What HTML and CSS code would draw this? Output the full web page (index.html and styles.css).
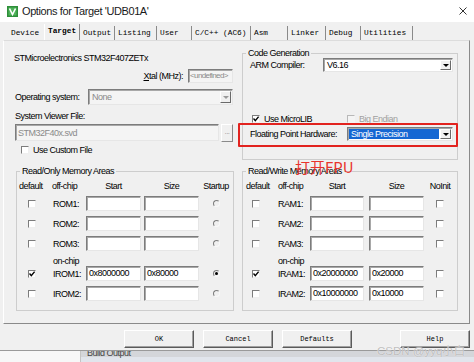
FILE: index.html
```html
<!DOCTYPE html>
<html lang="en">
<head>
  <meta charset="UTF-8">
  <meta name="viewport" content="width=device-width, initial-scale=1.0">
  <title>Options for Target 'UDB01A'</title>
  <link rel="stylesheet" href="styles.css">
</head>
<body>
  <div id="window">
    <div class="titlebar">
      <svg class="app-icon" viewBox="0 0 11 11">
        <rect x="0" y="0" width="11" height="11" fill="#2f8f3a"/>
        <rect x="1.5" y="1.5" width="8" height="8" fill="#4fb35a"/>
        <path d="M2.5 2.5 L5.5 8.5 L8.5 2.5" fill="none" stroke="#fff" stroke-width="1.6"/>
      </svg>
      <span class="title">Options for Target 'UDB01A'</span>
      <svg class="close" viewBox="0 0 8 8">
        <path d="M0.5 0.5 L7.5 7.5 M7.5 0.5 L0.5 7.5" stroke="#333" stroke-width="1"/>
      </svg>
    </div>

    <div class="dialog">
      <div class="tabs">
        <span class="tab first">Device</span>
        <span class="tab selected">Target</span>
        <span class="tab">Output</span>
        <span class="tab">Listing</span>
        <span class="tab">User</span>
        <span class="tab">C/C++ (AC6)</span>
        <span class="tab">Asm</span>
        <span class="tab">Linker</span>
        <span class="tab">Debug</span>
        <span class="tab">Utilities</span>
      </div>

      <div class="page">
        <div class="target-info">
          <div class="device">STMicroelectronics STM32F407ZETx</div>
          <div class="xtal-row">
            <span><u>X</u>tal (MHz):</span>
            <span class="edit disabled xtal">&lt;undefined&gt;</span>
          </div>
          <div class="os-row">
            <span>Operating system:</span>
            <div class="combo disabled os">
              <span class="value">None</span>
              <span class="arrow"><i class="tri"></i></span>
            </div>
          </div>
          <div class="svf-label">System Viewer File:</div>
          <div class="svd-row">
            <span class="edit disabled svd">STM32F40x.svd</span>
            <span class="browse">...</span>
          </div>
          <div class="custom">
            <span class="cb"></span>
            <span>Use Custom File</span>
          </div>
        </div>

        <fieldset class="group code-gen">
          <legend>Code Generation</legend>
          <div class="cg-row">
            <span>ARM Compiler:</span>
            <div class="combo arm">
              <span class="value">V6.16</span>
              <span class="arrow"><i class="tri"></i></span>
            </div>
          </div>
          <div class="opts-row">
            <span class="check-item microlib">
              <span class="cb checked"><svg viewBox="0 0 6 6"><path d="M0.5 2.5 L2.3 4.6 L5.6 0.6" fill="none" stroke="#000" stroke-width="1.4"/></svg></span>
              <span>Use MicroLIB</span>
            </span>
            <span class="check-item off">
              <span class="cb"></span>
              <span>Big Endian</span>
            </span>
          </div>
          <div class="cg-row fph">
            <span>Floating Point Hardware:</span>
            <div class="combo fpu">
              <span class="value picked">Single Precision</span>
              <span class="arrow"><i class="tri"></i></span>
            </div>
          </div>
        </fieldset>

        <fieldset class="group mem rom">
          <legend>Read/Only Memory Areas</legend>
          <div class="mem-head">
            <span class="c1">default</span>
            <span class="c2">off-chip</span>
            <span class="c3">Start</span>
            <span class="c4">Size</span>
            <span class="c5">Startup</span>
          </div>
          <div class="mem-row">
            <span class="c1"><span class="cb"></span></span>
            <span class="c2">ROM1:</span>
            <span class="edit"></span>
            <span class="edit"></span>
            <span class="c5"><span class="rb"></span></span>
          </div>
          <div class="mem-row">
            <span class="c1"><span class="cb"></span></span>
            <span class="c2">ROM2:</span>
            <span class="edit"></span>
            <span class="edit"></span>
            <span class="c5"><span class="rb"></span></span>
          </div>
          <div class="mem-row">
            <span class="c1"><span class="cb"></span></span>
            <span class="c2">ROM3:</span>
            <span class="edit"></span>
            <span class="edit"></span>
            <span class="c5"><span class="rb"></span></span>
          </div>
          <div class="mem-sub"><span class="c2">on-chip</span></div>
          <div class="mem-row first-chip">
            <span class="c1"><span class="cb checked"><svg viewBox="0 0 6 6"><path d="M0.5 2.5 L2.3 4.6 L5.6 0.6" fill="none" stroke="#000" stroke-width="1.4"/></svg></span></span>
            <span class="c2">IROM1:</span>
            <span class="edit">0x8000000</span>
            <span class="edit">0x80000</span>
            <span class="c5"><span class="rb on"></span></span>
          </div>
          <div class="mem-row">
            <span class="c1"><span class="cb"></span></span>
            <span class="c2">IROM2:</span>
            <span class="edit"></span>
            <span class="edit"></span>
            <span class="c5"><span class="rb"></span></span>
          </div>
        </fieldset>

        <fieldset class="group mem ram">
          <legend>Read/Write Memory Areas</legend>
          <div class="mem-head">
            <span class="c1">default</span>
            <span class="c2">off-chip</span>
            <span class="c3">Start</span>
            <span class="c4">Size</span>
            <span class="c5">NoInit</span>
          </div>
          <div class="mem-row">
            <span class="c1"><span class="cb"></span></span>
            <span class="c2">RAM1:</span>
            <span class="edit"></span>
            <span class="edit"></span>
            <span class="c5"><span class="cb"></span></span>
          </div>
          <div class="mem-row">
            <span class="c1"><span class="cb"></span></span>
            <span class="c2">RAM2:</span>
            <span class="edit"></span>
            <span class="edit"></span>
            <span class="c5"><span class="cb"></span></span>
          </div>
          <div class="mem-row">
            <span class="c1"><span class="cb"></span></span>
            <span class="c2">RAM3:</span>
            <span class="edit"></span>
            <span class="edit"></span>
            <span class="c5"><span class="cb"></span></span>
          </div>
          <div class="mem-sub"><span class="c2">on-chip</span></div>
          <div class="mem-row first-chip">
            <span class="c1"><span class="cb checked"><svg viewBox="0 0 6 6"><path d="M0.5 2.5 L2.3 4.6 L5.6 0.6" fill="none" stroke="#000" stroke-width="1.4"/></svg></span></span>
            <span class="c2">IRAM1:</span>
            <span class="edit">0x20000000</span>
            <span class="edit">0x20000</span>
            <span class="c5"><span class="cb"></span></span>
          </div>
          <div class="mem-row">
            <span class="c1"><span class="cb"></span></span>
            <span class="c2">IRAM2:</span>
            <span class="edit">0x10000000</span>
            <span class="edit">0x10000</span>
            <span class="c5"><span class="cb"></span></span>
          </div>
        </fieldset>

        <div class="fpu-mark"></div>
        <span class="fpu-note">打开FPU</span>
      </div>

      <div class="buttons">
        <span class="btn">OK</span>
        <span class="btn">Cancel</span>
        <span class="btn">Defaults</span>
        <span class="btn help">Help</span>
      </div>
    </div>

    <div class="backdrop">
      <span class="side"></span>
      <span class="build"><span>Build Output</span></span>
    </div>
    <span class="watermark">CSDN @yyq小白</span>
  </div>
</body>
</html>
```

FILE: styles.css
```css
* {
  box-sizing: border-box;
}
body {
  margin: 0;
  background: #fff;
  font-family: "Liberation Sans", Arial, sans-serif;
  font-size: 9px;
  letter-spacing: -0.5px;
  color: #000;
}
#window {
  position: relative;
  width: 474px;
  height: 362px;
  overflow: hidden;
  background: #fff;
}

/* title bar */
.titlebar {
  height: 22px;
  display: flex;
  align-items: center;
  padding-left: 7px;
}
.app-icon {
  width: 11px;
  height: 11px;
  margin-right: 4px;
}
.title {
  font-size: 11px;
  letter-spacing: -0.4px;
  color: #1a1a1a;
}
.close {
  width: 8px;
  height: 8px;
  margin-left: auto;
  margin-right: 7px;
}

/* dialog body */
.dialog {
  height: 329px;
  background: #f0f0f0;
  padding-top: 4px;
  border-bottom: 1px solid #9a9a9a;
}
.tabs {
  display: grid;
  grid-template-columns: 36px 36px 35px 42px 35px 59px 37px 38px 35px 52px;
  margin-left: 8px;
  height: 14px;
  font-family: "Liberation Mono", "Courier New", monospace;
  font-size: 7.8px;
  letter-spacing: 0;
}
.tab {
  line-height: 14px;
  padding-left: 3px;
  border-right: 1px solid #8a8a8a;
  white-space: nowrap;
}
.tab.first {
  border-right: none;
}
.tab.selected {
  font-weight: bold;
  margin-top: -2px;
  line-height: 15px;
  height: 17px;
  border-left: 1px solid #fff;
  background: #f0f0f0;
}

.page {
  position: relative;
  margin-left: 3px;
  width: 467px;
  height: 284px;
  border-top: 1px solid #dcdcdc;
  border-left: 1px solid #fff;
  border-right: 1px solid #8a8a8a;
  border-bottom: 1px solid #8a8a8a;
  padding-left: 10px;
  display: grid;
  grid-template-columns: 220px 216px;
  column-gap: 8px;
  row-gap: 6px;
  align-items: start;
  align-content: start;
}

/* left top: device info */
.target-info {
  display: flex;
  flex-direction: column;
}
.device {
  margin-top: 12px;
  line-height: 10px;
}
.xtal-row {
  margin-top: 5px;
  height: 15px;
  display: flex;
  justify-content: flex-end;
  align-items: center;
  gap: 5px;
}
.os-row {
  margin-top: 6px;
  height: 16px;
  display: flex;
  align-items: center;
  padding-left: 1px;
}
.svf-label {
  margin-top: 6px;
  line-height: 10px;
  padding-left: 1px;
}
.svd-row {
  margin-top: 3px;
  height: 17px;
  display: flex;
  gap: 2px;
  padding-left: 1px;
}
.custom {
  margin-top: 4px;
  height: 9px;
  display: flex;
  align-items: center;
  gap: 4px;
  padding-left: 7px;
}

/* controls */
.edit {
  display: block;
  height: 15px;
  background: #fff;
  border: 1px solid;
  border-color: #7c7c7c #e6e6e6 #e6e6e6 #7c7c7c;
  box-shadow: inset 1px 1px 0 #a8a8a8;
  padding: 1px 0 0 2px;
  line-height: 10px;
  white-space: nowrap;
  overflow: hidden;
}
.edit.disabled {
  background: #f4f4f4;
  color: #8a8a8a;
}
.edit.xtal {
  width: 45px;
  height: 14px;
  margin-right: 1px;
  padding-left: 1px;
  font-size: 8px;
  letter-spacing: -0.6px;
}
.edit.svd {
  width: 204px;
  height: 17px;
  padding-top: 3px;
}
.browse {
  width: 12px;
  height: 18px;
  background: #f0f0f0;
  border: 1px solid;
  border-color: #fff #8a8a8a #8a8a8a #fff;
  color: #9a9a9a;
  font-size: 8px;
  line-height: 14px;
  text-align: center;
}
.combo {
  display: flex;
  background: #fff;
  border: 1px solid;
  border-color: #7c7c7c #e6e6e6 #e6e6e6 #7c7c7c;
  box-shadow: inset 1px 1px 0 #a8a8a8;
  padding: 1px;
}
.combo .value {
  flex: 1;
  padding-left: 2px;
  display: flex;
  align-items: center;
}
.combo .arrow {
  width: 11px;
  background: #f0f0f0;
  border: 1px solid;
  border-color: #fff #6a6a6a #6a6a6a #fff;
  display: flex;
  align-items: center;
  justify-content: center;
}
.tri {
  width: 0;
  height: 0;
  border-left: 3px solid transparent;
  border-right: 3px solid transparent;
  border-top: 3px solid #000;
}
.combo.disabled {
  background: #f4f4f4;
  color: #8a8a8a;
}
.combo.disabled .tri {
  border-top-color: #9a9a9a;
}
.combo.os {
  margin-left: auto;
  margin-right: 1px;
  width: 145px;
  height: 16px;
}
.combo.arm {
  margin-left: auto;
  margin-right: 4px;
  width: 130px;
  height: 14px;
}
.combo.fpu {
  margin-left: auto;
  margin-right: 4px;
  width: 106px;
  height: 14px;
}
.value.picked {
  background: #1567d3;
  color: #fff;
  margin-right: 1px;
}

.cb {
  display: flex;
  align-items: center;
  justify-content: center;
  width: 8px;
  height: 8px;
  background: #fff;
  border: 1px solid;
  border-color: #7c7c7c #efefef #efefef #7c7c7c;
  flex-shrink: 0;
}
.cb svg {
  width: 6px;
  height: 6px;
}
.rb {
  display: block;
  width: 7px;
  height: 7px;
  border-radius: 50%;
  border: 1px solid;
  border-color: #7c7c7c #f8f8f8 #f8f8f8 #7c7c7c;
}
.rb.on::after {
  content: "";
  display: block;
  width: 3px;
  height: 3px;
  margin: 1px;
  border-radius: 50%;
  background: #000;
}

/* group boxes */
.group {
  margin: 0;
  padding: 0 0 9px;
  border: 1px solid #cdcdcd;
  min-width: 0;
}
.group legend {
  margin-left: 3px;
  padding: 0 2px;
  line-height: 10px;
}
.code-gen {
  margin-top: 7px;
  width: 216px;
  padding-bottom: 18px;
}
.cg-row {
  display: flex;
  align-items: center;
  height: 14px;
  padding-left: 7px;
}
.cg-row.fph {
  margin-top: 4px;
}
.opts-row {
  margin-top: 42px;
  height: 9px;
  display: flex;
  align-items: center;
  padding-left: 9px;
}
.check-item {
  display: flex;
  align-items: center;
  gap: 4px;
}
.check-item.microlib {
  width: 95px;
}
.check-item.off {
  color: #a0a0a0;
}
.check-item.off .cb {
  background: #f4f4f4;
  border-color: #b8b8b8 #f4f4f4 #f4f4f4 #b8b8b8;
}

/* memory area tables */
.rom {
  margin-left: 2px;
  width: 218px;
}
.ram {
  width: 216px;
}
.mem-head,
.mem-row,
.mem-sub {
  display: grid;
  align-items: center;
  white-space: nowrap;
}
.rom .mem-head,
.rom .mem-row,
.rom .mem-sub {
  grid-template-columns: 30px 39px 58px 55px 34px;
}
.ram .mem-head,
.ram .mem-row,
.ram .mem-sub {
  grid-template-columns: 26px 41px 59px 55px 32px;
}
.mem-head {
  margin-top: 5px;
  height: 10px;
  line-height: 10px;
}
.mem-row {
  margin-top: 5px;
  height: 15px;
}
.mem-row.first-chip {
  margin-top: 0;
}
.mem-sub {
  margin-top: 5px;
  height: 10px;
  line-height: 10px;
}
.mem-head .c1 {
  padding-left: 2px;
}
.ram .mem-head .c1 {
  padding-left: 3px;
}
.c2 {
  padding-left: 6px;
  grid-column: 2;
}
.ram .c2 {
  padding-left: 9px;
}
.mem-head .c2 {
  padding-left: 5px;
}
.ram .mem-head .c2 {
  padding-left: 9px;
}
.mem-head .c3 {
  text-align: center;
  padding-right: 3px;
}
.ram .mem-head .c3 {
  padding-right: 5px;
}
.mem-head .c4,
.mem-head .c5 {
  text-align: center;
}
.mem-row .c1,
.mem-row .c5 {
  display: flex;
  justify-content: center;
}
.mem-row .edit {
  width: 55px;
}
.ram .mem-row .edit:nth-child(3) {
  width: 54px;
}

/* annotation overlays */
.fpu-mark {
  position: absolute;
  left: 234px;
  top: 82px;
  width: 220px;
  height: 24px;
  border: 2px solid #e2231f;
  border-radius: 1px;
}
.fpu-note {
  position: absolute;
  left: 291px;
  top: 117px;
  font-family: "Noto Sans CJK SC", "Noto Sans", sans-serif;
  font-size: 15px;
  line-height: 17px;
  letter-spacing: 0;
  color: #e8342c;
}

/* buttons */
.buttons {
  display: flex;
  gap: 9px;
  margin-top: 6px;
  padding-left: 124px;
}
.btn {
  width: 70px;
  height: 18px;
  background: #f0f0f0;
  border: 1px solid;
  border-color: #fff #5a5a5a #5a5a5a #fff;
  box-shadow: inset -1px -1px 0 #a0a0a0;
  display: flex;
  align-items: center;
  justify-content: center;
  font-family: "Liberation Mono", "Courier New", monospace;
  font-size: 7px;
  letter-spacing: 0;
}
.btn.help {
  margin-left: 39px;
}

/* IDE behind the dialog */
.backdrop {
  display: flex;
  height: 11px;
}
.backdrop .side {
  width: 80px;
  background: #f7f7f7;
}
.backdrop .build {
  flex: 1;
  background: #e1e5ec;
  overflow: hidden;
  border-left: 1px solid #c4c4c4;
}
.backdrop .build span {
  display: block;
  margin-top: -3px;
  padding-left: 6px;
  height: 9px;
  line-height: 10px;
  background: #d4d6da;
  color: #444;
}
.watermark {
  position: absolute;
  left: 377px;
  top: 342px;
  font-family: "Liberation Sans", "Noto Sans CJK SC", sans-serif;
  font-size: 11.5px;
  letter-spacing: 0;
  color: rgba(170, 170, 170, 0.75);
  text-shadow: 0 0 1px #fff;
}
```
